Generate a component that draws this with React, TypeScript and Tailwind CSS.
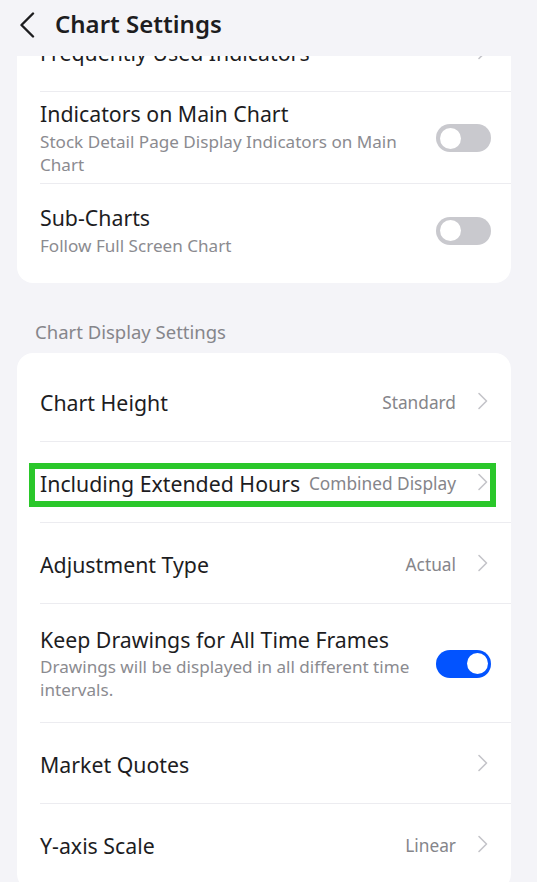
import React from "react";

const Chevron = () => (
  <svg width="12" height="18" viewBox="0 0 12 18" fill="none" className="shrink-0">
    <path d="M2 1.5L9.5 9L2 16.5" stroke="#c4c4c9" strokeWidth="1.6" strokeLinecap="round" strokeLinejoin="round" />
  </svg>
);

const Toggle = ({ on }: { on: boolean }) => (
  <div
    className={
      on
        ? "w-[55px] h-[28px] rounded-full flex items-center justify-end shrink-0 px-[3.5px] bg-[#0253ff]"
        : "w-[55px] h-[28px] rounded-full flex items-center justify-start shrink-0 px-[3.5px] bg-[#c9c9ce]"
    }
  >
    <div className="w-[21px] h-[21px] rounded-full bg-white" />
  </div>
);

const Divider = () => <div className="h-px bg-[#ececf0] ml-[23px]" />;

const NavRow = ({ title, value, children }: { title: string; value?: string; children?: React.ReactNode }) => (
  <div className="relative h-[80px] flex items-center pl-[23px] pr-[22px]">
    <div className="flex-1 mt-[4px] text-[21.3px] leading-[28px] text-[#1d1d1f] whitespace-nowrap">{title}</div>
    {value && <div className="mt-[4px] mr-[21px] text-[17.3px] leading-[24px] text-[#85858a] whitespace-nowrap">{value}</div>}
    <Chevron />
    {children}
  </div>
);

export default function App() {
  return (
    <div className="w-[537px] h-[882px] overflow-hidden bg-[#f4f4f8] flex flex-col font-['Noto_Sans',sans-serif]">
      <header className="h-[56px] shrink-0 flex items-start relative z-10 bg-[#f4f4f8]">
        <svg width="16" height="26" viewBox="0 0 16 26" fill="none" className="ml-[18.5px] mt-[11.5px]">
          <path d="M14 1.5L2.5 13L14 24.5" stroke="#1d1d1f" strokeWidth="2.4" strokeLinecap="round" strokeLinejoin="round" />
        </svg>
        <h1 className="ml-[20.5px] mt-[8px] text-[24px] leading-[32px] font-semibold text-[#1d1d1f]">Chart Settings</h1>
      </header>
      <div className="flex-1 overflow-hidden">
        <div className="-mt-[53px]">
          {/* Card 1 */}
          <div className="ml-[17px] w-[494px] bg-white rounded-[16px] pt-[8px] pb-[6px]">
            <NavRow title="Frequently Used Indicators" />
            <Divider />
            <div className="flex items-center pl-[23px] pr-[20px] pt-[8px] pb-[7px]">
              <div className="flex-1 mr-[16px]">
                <div className="text-[21.3px] leading-[28px] text-[#1d1d1f]">Indicators on Main Chart</div>
                <div className="mt-[2px] text-[17.1px] leading-[23px] text-[#8b8b90]">
                  Stock Detail Page Display Indicators on Main Chart
                </div>
              </div>
              <Toggle on={false} />
            </div>
            <Divider />
            <div className="flex items-center pl-[23px] pr-[20px] py-[20px]">
              <div className="flex-1 mr-[16px]">
                <div className="text-[21.3px] leading-[28px] text-[#1d1d1f]">Sub-Charts</div>
                <div className="mt-[2px] text-[17.1px] leading-[23px] text-[#8b8b90]">Follow Full Screen Chart</div>
              </div>
              <Toggle on={false} />
            </div>
          </div>

          <div className="ml-[35px] mt-[37px] text-[18.5px] leading-[23px] text-[#86868b]">Chart Display Settings</div>

          {/* Card 2 */}
          <div className="ml-[17px] mt-[10px] w-[494px] bg-white rounded-[16px] pt-[8px] pb-[6px]">
            <NavRow title="Chart Height" value="Standard" />
            <Divider />
            <NavRow title="Including Extended Hours" value="Combined Display">
              <div className="absolute left-[12px] right-[15px] top-[21px] bottom-[15px] border-[6px] border-[#2ac72a]" />
            </NavRow>
            <Divider />
            <NavRow title="Adjustment Type" value="Actual" />
            <Divider />
            <div className="flex items-center pl-[23px] pr-[20px] pt-[22px] pb-[21px]">
              <div className="flex-1 mr-[16px]">
                <div className="text-[21.3px] leading-[28px] text-[#1d1d1f]">Keep Drawings for All Time Frames</div>
                <div className="mt-[2px] text-[17.1px] leading-[22.5px] text-[#8b8b90]">
                  Drawings will be displayed in all different time intervals.
                </div>
              </div>
              <Toggle on={true} />
            </div>
            <Divider />
            <NavRow title="Market Quotes" />
            <Divider />
            <NavRow title="Y-axis Scale" value="Linear" />
          </div>
        </div>
      </div>
    </div>
  );
}
